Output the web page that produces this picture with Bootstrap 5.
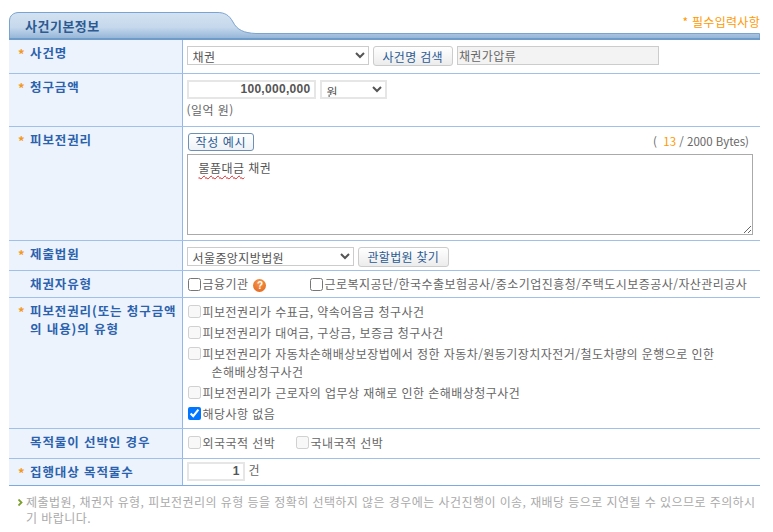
<!DOCTYPE html>
<html lang="ko">
<head>
<meta charset="utf-8">
<link href="https://cdn.jsdelivr.net/npm/bootstrap@5.3.0/dist/css/bootstrap.min.css" rel="stylesheet">
<style>
html,body{background:#fff;}
body{font-family:"Noto Sans CJK KR","Liberation Sans",sans-serif;font-size:12px;letter-spacing:.45px;color:#666;height:532px;overflow:hidden;padding:0 13px 0 9px;line-height:1.2;}
.hdbar{height:29px;margin-top:11px;position:relative;}
.hdsvg{position:absolute;left:0;top:0;display:block;}
.hdtitle{position:absolute;left:16px;top:7px;font-size:13px;font-weight:700;color:#2c5a92;letter-spacing:.5px;}
.hdreq{position:absolute;right:0;top:4px;font-size:12px;color:#f90;letter-spacing:.3px;}
.frm{width:751px;border-collapse:collapse;table-layout:fixed;}
.frm th,.frm td{border-bottom:1px solid #a0c0e8;vertical-align:top;padding:0;}
.frm tr:last-child th,.frm tr:last-child td{border-bottom-color:#7eaae2;}
.frm th{width:173px;background:#edf3fc;border-right:1px solid #93b7e6;font-size:12.500px;font-weight:700;color:#2a62ad;position:relative;padding:4px 4px 0 21px;line-height:18px;letter-spacing:.9px;word-break:break-all;}
.frm td{padding:6px 7px 0 4px;}
.frm td.pt4x{padding-top:4px;}
.frm td.pt5x{padding-top:5px;}
.frm td.pt3x{padding-top:3px;}
.pt4x .cbx{top:3px;}
.req::before{content:"*";position:absolute;left:9px;top:5px;color:#f39a1e;font-weight:700;font-size:13px;}
.fsel{height:19px;border:1px solid #ccc;background:#fff;color:#555;font-size:12px;letter-spacing:.4px;font-family:inherit;padding:0 1px;border-radius:0;}
.fbtn{height:20px;border:1px solid #ccc;border-radius:3px;background:linear-gradient(#fff,#ececec);color:#2a5a94;font-size:12px;letter-spacing:.3px;font-family:inherit;padding:0 9px;line-height:17px;}
.ftxt{height:19px;border:1px solid #ccc;background:#f3f3f3;color:#666;font-size:12px;letter-spacing:.4px;font-family:inherit;padding:0 1px;width:202px;}
.famt{height:19px;width:129px;border:2px solid #e6e6e6;text-align:right;font-weight:700;color:#555;font-size:12px;letter-spacing:.3px;font-family:"Liberation Sans",sans-serif;padding:0 3px;}
.fone{height:19px;width:58px;border:2px solid #e6e6e6;text-align:right;font-weight:700;color:#555;font-size:12px;font-family:"Liberation Sans",sans-serif;padding:0 3px;}
.unitx{line-height:15px;}
.fex{height:18px;border:1px solid #6f8fb5;border-radius:3px;background:linear-gradient(#fff,#eef2f6);color:#2a5a94;font-size:12px;letter-spacing:.6px;font-family:inherit;padding:0 7px;line-height:15px;margin-left:1px;}
.fta{width:566px;height:81px;border:1px solid #aaa;color:#555;font-size:12px;font-family:inherit;padding:5px 11px;margin-top:3px;overflow:auto;resize:both;line-height:16px;}
.spell{text-decoration:underline wavy #e02020 1px;text-underline-offset:2px;}
.cbx{width:13px;height:13px;margin:0 1px 0 1px;flex:none;position:relative;top:2px;}
.opt{display:flex;align-items:flex-start;gap:1px;line-height:18px;color:#666;}
.hang{display:block;padding-left:9px;}
.optlist{display:flex;flex-direction:column;gap:3px;}
.qmark{display:inline-block;width:13px;height:13px;margin-top:4px;border-radius:50%;background:radial-gradient(circle at 50% 30%,#f79a4a,#e0601c);color:#fff;font-size:10px;font-weight:700;line-height:13px;text-align:center;font-family:"Liberation Sans",sans-serif;letter-spacing:0;}
.count{color:#666;letter-spacing:0;font-size:11.500px;}
.cnum{color:#f90;}
.note{position:relative;margin:8px 0 0;padding-left:17px;width:751px;color:#aaa;line-height:16px;font-size:12px;letter-spacing:.43px;word-break:break-all;}
.notemark{position:absolute;left:9px;top:5px;display:block;}
</style>
</head>
<body>
<div class="hdbar">
<svg class="hdsvg" width="751" height="29" viewBox="0 0 751 29" aria-hidden="true">
<defs><linearGradient id="g" x1="0" y1="0" x2="0" y2="1"><stop offset="0" stop-color="#d3e2f1"/><stop offset=".55" stop-color="#c5d8ec"/><stop offset="1" stop-color="#8fb2d6"/></linearGradient></defs>
<path d="M.5 28.500V10C.5 4.500 4.500 1.500 10 1.500H208C216 1.500 220 4 224 11C228 19 235 22 247 22.500H750.500V28.500Z" fill="url(#g)" stroke="#7ba3cf"/>
<rect x="0" y="27" width="751" height="2" fill="#6f9bc8"/>
</svg>
<span class="hdtitle">사건기본정보</span>
<span class="hdreq">* 필수입력사항</span>
</div>
<table class="frm">
<tr style="height:33px"><th class="req">사건명</th><td><div class="d-flex gap-1 align-items-start"><select class="fsel" style="width:182px"><option>채권</option></select><button class="fbtn" type="button">사건명 검색</button><input class="ftxt" value="채권가압류" readonly></div></td></tr>
<tr style="height:53px"><th class="req">청구금액</th><td><div class="d-flex gap-1"><input class="famt" value="100,000,000"><select class="fsel" style="width:67px;border-width:2px;border-color:#e6e6e6"><option>원</option></select></div><div class="mt-1">(일억 원)</div></td></tr>
<tr style="height:114px"><th class="req">피보전권리</th><td><div class="d-flex justify-content-between align-items-center"><button class="fex" type="button">작성 예시</button><span class="count me-1">( &nbsp;<span class="cnum">13</span> / 2000 Bytes)</span></div><div class="fta"><span class="spell">물품대금</span> 채권</div></td></tr>
<tr style="height:30px"><th class="req">제출법원</th><td><div class="d-flex gap-1 align-items-start"><select class="fsel" style="width:167px"><option>서울중앙지방법원</option></select><button class="fbtn" type="button">관할법원 찾기</button></div></td></tr>
<tr style="height:27px"><th>채권자유형</th><td class="pt4x"><div class="d-flex"><label class="opt" style="width:122px"><input class="cbx" type="checkbox"><span>금융기관</span> <span class="qmark ms-1">?</span></label><label class="opt"><input class="cbx" type="checkbox"><span>근로복지공단/한국수출보험공사/중소기업진흥청/주택도시보증공사/자산관리공사</span></label></div></td></tr>
<tr style="height:131px"><th class="req">피보전권리(또는 청구금액의 내용)의 유형</th><td class="pt5x"><div class="optlist">
<label class="opt"><input class="cbx" type="checkbox" disabled><span>피보전권리가 수표금, 약속어음금 청구사건</span></label>
<label class="opt"><input class="cbx" type="checkbox" disabled><span>피보전권리가 대여금, 구상금, 보증금 청구사건</span></label>
<label class="opt"><input class="cbx" type="checkbox" disabled><span>피보전권리가 자동차손해배상보장법에서 정한 자동차/원동기장치자전거/철도차량의 운행으로 인한<span class="hang">손해배상청구사건</span></span></label>
<label class="opt"><input class="cbx" type="checkbox" disabled><span>피보전권리가 근로자의 업무상 재해로 인한 손해배상청구사건</span></label>
<label class="opt"><input class="cbx" type="checkbox" checked><span>해당사항 없음</span></label>
</div></td></tr>
<tr style="height:30px"><th>목적물이 선박인 경우</th><td class="pt5x"><div class="d-flex"><label class="opt" style="width:108px"><input class="cbx" type="checkbox" disabled><span>외국국적 선박</span></label><label class="opt"><input class="cbx" type="checkbox" disabled><span>국내국적 선박</span></label></div></td></tr>
<tr style="height:27px"><th class="req">집행대상 목적물수</th><td class="pt3x"><div class="d-flex gap-1 align-items-start"><input class="fone" value="1"><span class="unitx">건</span></div></td></tr>
</table>
<p class="note"><svg class="notemark" width="5" height="7" viewBox="0 0 5 7" aria-hidden="true"><path d="M.5 .5 3.500 3.500 .5 6.500" fill="none" stroke="#7a9f2a" stroke-width="1.800"/></svg>제출법원, 채권자 유형, 피보전권리의 유형 등을 정확히 선택하지 않은 경우에는 사건진행이 이송, 재배당 등으로 지연될 수 있으므로 주의하시기 바랍니다.</p>
</body>
</html>
